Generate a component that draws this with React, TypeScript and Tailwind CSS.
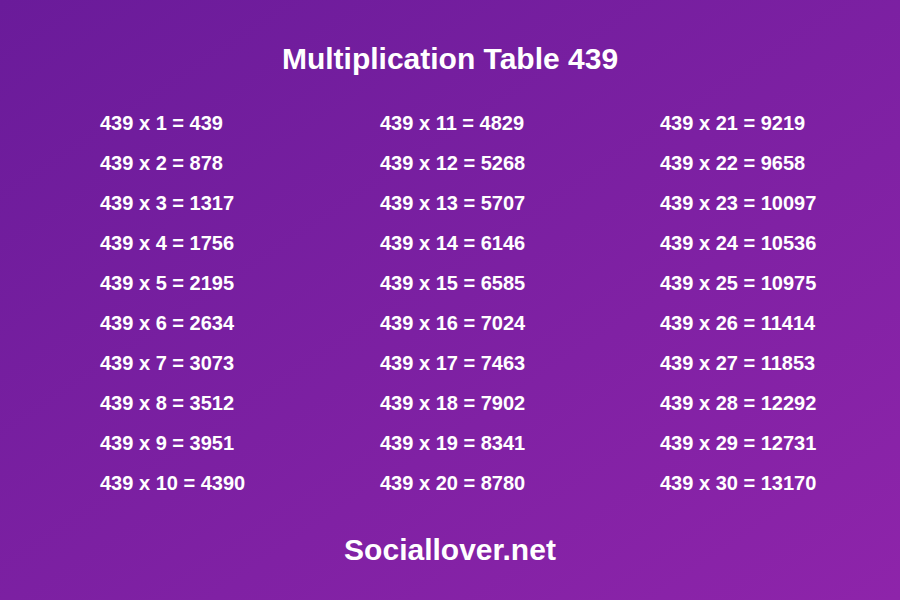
import React from 'react';

const BASE = 439;

export default function App() {
  const columns = [0, 1, 2].map(c =>
    Array.from({ length: 10 }, (_, i) => c * 10 + i + 1)
  );

  return (
    <div
      className="w-[900px] h-[600px] overflow-hidden bg-linear-to-br from-[#6a1b9a] to-[#8e24aa] text-white flex flex-col"
      style={{ fontFamily: '"Liberation Sans", Arial, sans-serif' }}
    >
      <h1 className="pt-[41px] text-center text-[30px] leading-[36px] font-bold">
        Multiplication Table {BASE}
      </h1>

      {/* three columns of ten rows */}
      <div className="mt-[26px] pl-[100px] flex">
        {columns.map((col, ci) => (
          <div key={ci} className="w-[280px] shrink-0 flex flex-col">
            {col.map(n => (
              <p key={n} className="text-[20px] leading-[40px] font-bold whitespace-nowrap">
                {BASE} x {n} = {BASE * n}
              </p>
            ))}
          </div>
        ))}
      </div>

      <p className="mt-[29px] text-center text-[30px] leading-[36px] font-bold">Sociallover.net</p>
    </div>
  );
}
